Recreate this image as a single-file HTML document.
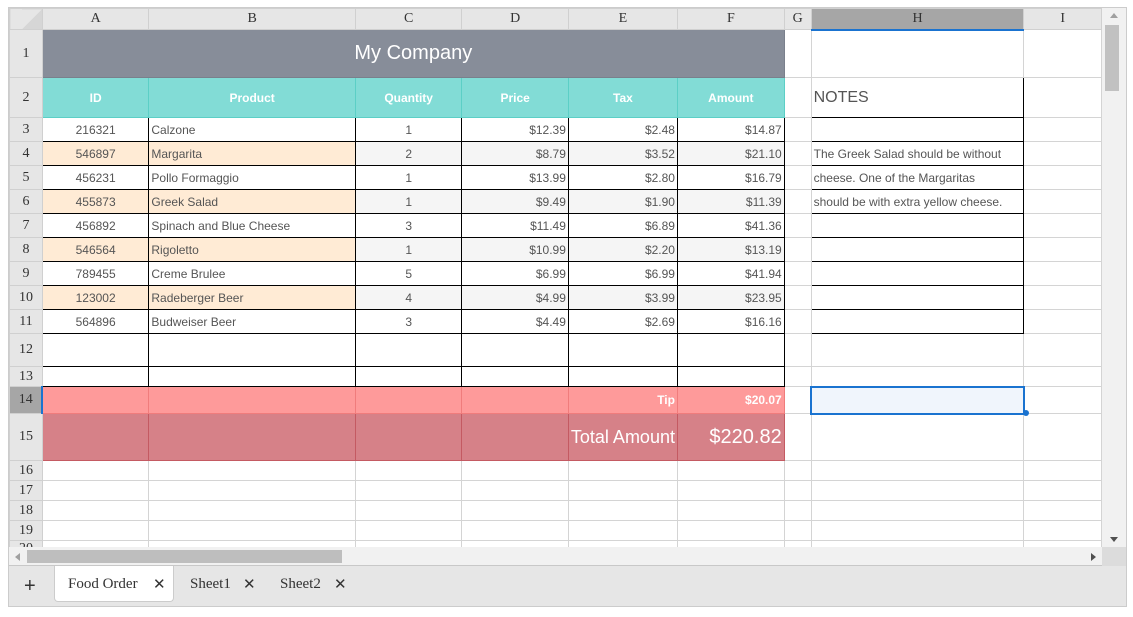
<!DOCTYPE html>
<html><head><meta charset="utf-8"><style>
*{box-sizing:border-box;margin:0;padding:0}
body{width:1133px;height:617px;background:#fff;position:relative;overflow:hidden;font-family:"Liberation Sans",Arial,sans-serif}
#box{position:absolute;left:8px;top:7px;width:1119px;height:600px;border:1px solid #ccc;background:#fff;overflow:hidden}
#grid{position:absolute;left:0;top:0;width:1093px;height:539px;overflow:hidden}
table{border-collapse:collapse;table-layout:fixed;position:absolute;left:0;top:0}
td{border:1px solid #d4d4d4;font-size:12px;color:#555;overflow:hidden;white-space:nowrap;padding:0 2px;vertical-align:middle}
td.h{background:#e6e6e6;font-family:"Liberation Serif",serif;font-size:14px;color:#333;text-align:center;border-color:#d0d0d0}
td.hs{background:#a6a6a6}
td.b{border:1px solid #000}
td.c{text-align:center}
td.r{text-align:right}
tr.alt td.o{background:#ffebd5}
tr.alt td.g{background:#f5f5f5}
td.t{background:#82dcd6;color:#fff;font-weight:bold;text-align:center;border-color:#5ccfc6}
td.red{background:#fe9a9a;border-color:#f07c7c;color:#fff;font-weight:bold;text-align:right}
td.dred{background:#d68188;border-color:#c45a62;color:#fff;text-align:right}
</style></head><body>
<div id="box">
<div id="grid">
<table>
<colgroup><col style="width:33px"><col style="width:107px"><col style="width:207px"><col style="width:107px"><col style="width:107px"><col style="width:107px"><col style="width:107px"><col style="width:27px"><col style="width:213px"><col style="width:78px"></colgroup>
<tr style="height:21px"><td class="h" style="background:linear-gradient(135deg,#e6e6e6 60%,#d6d6d6 60%)"></td><td class="h">A</td><td class="h">B</td><td class="h">C</td><td class="h">D</td><td class="h">E</td><td class="h">F</td><td class="h">G</td><td class="h hs" style="border-bottom:2px solid #1a73d0">H</td><td class="h">I</td></tr>
<tr style="height:48px"><td class="h">1</td><td colspan="6" style="background:#878d99;color:#fff;font-size:20px;text-align:center;border-color:#7a808c">My Company</td><td></td><td></td><td></td></tr>
<tr style="height:40px"><td class="h">2</td><td class="t">ID</td><td class="t">Product</td><td class="t">Quantity</td><td class="t">Price</td><td class="t">Tax</td><td class="t">Amount</td><td></td><td class="b" style="font-size:16px">NOTES</td><td></td></tr>
<tr style="height:24px"><td class="h">3</td><td class="b c o">216321</td><td class="b o">Calzone</td><td class="b c g">1</td><td class="b r g">$12.39</td><td class="b r g">$2.48</td><td class="b r g">$14.87</td><td></td><td class="b"></td><td></td></tr>
<tr class="alt" style="height:24px"><td class="h">4</td><td class="b c o">546897</td><td class="b o">Margarita</td><td class="b c g">2</td><td class="b r g">$8.79</td><td class="b r g">$3.52</td><td class="b r g">$21.10</td><td></td><td class="b">The Greek Salad should be without</td><td></td></tr>
<tr style="height:24px"><td class="h">5</td><td class="b c">456231</td><td class="b">Pollo Formaggio</td><td class="b c">1</td><td class="b r">$13.99</td><td class="b r">$2.80</td><td class="b r">$16.79</td><td></td><td class="b">cheese. One of the Margaritas</td><td></td></tr>
<tr class="alt" style="height:24px"><td class="h">6</td><td class="b c o">455873</td><td class="b o">Greek Salad</td><td class="b c g">1</td><td class="b r g">$9.49</td><td class="b r g">$1.90</td><td class="b r g">$11.39</td><td></td><td class="b">should be with extra yellow cheese.</td><td></td></tr>
<tr style="height:24px"><td class="h">7</td><td class="b c">456892</td><td class="b">Spinach and Blue Cheese</td><td class="b c">3</td><td class="b r">$11.49</td><td class="b r">$6.89</td><td class="b r">$41.36</td><td></td><td class="b"></td><td></td></tr>
<tr class="alt" style="height:24px"><td class="h">8</td><td class="b c o">546564</td><td class="b o">Rigoletto</td><td class="b c g">1</td><td class="b r g">$10.99</td><td class="b r g">$2.20</td><td class="b r g">$13.19</td><td></td><td class="b"></td><td></td></tr>
<tr style="height:24px"><td class="h">9</td><td class="b c">789455</td><td class="b">Creme Brulee</td><td class="b c">5</td><td class="b r">$6.99</td><td class="b r">$6.99</td><td class="b r">$41.94</td><td></td><td class="b"></td><td></td></tr>
<tr class="alt" style="height:24px"><td class="h">10</td><td class="b c o">123002</td><td class="b o">Radeberger Beer</td><td class="b c g">4</td><td class="b r g">$4.99</td><td class="b r g">$3.99</td><td class="b r g">$23.95</td><td></td><td class="b"></td><td></td></tr>
<tr style="height:24px"><td class="h">11</td><td class="b c">564896</td><td class="b">Budweiser Beer</td><td class="b c">3</td><td class="b r">$4.49</td><td class="b r">$2.69</td><td class="b r">$16.16</td><td></td><td class="b"></td><td></td></tr>
<tr style="height:33px"><td class="h">12</td><td class="b"></td><td class="b"></td><td class="b"></td><td class="b"></td><td class="b"></td><td class="b"></td><td></td><td></td><td></td></tr>
<tr style="height:20px"><td class="h">13</td><td class="b"></td><td class="b"></td><td class="b"></td><td class="b"></td><td class="b"></td><td class="b"></td><td></td><td></td><td></td></tr>
<tr style="height:27px"><td class="h hs" style="border-right:2px solid #1a73d0">14</td><td class="red"></td><td class="red"></td><td class="red"></td><td class="red"></td><td class="red">Tip</td><td class="red">$20.07</td><td></td><td style="background:#f0f5fc;border:2px solid #1a73d0"></td><td></td></tr>
<tr style="height:47px"><td class="h">15</td><td class="dred"></td><td class="dred"></td><td class="dred"></td><td class="dred"></td><td class="dred" style="font-size:18px">Total Amount</td><td class="dred" style="font-size:20px">$220.82</td><td></td><td></td><td></td></tr>
<tr style="height:20px"><td class="h">16</td><td></td><td></td><td></td><td></td><td></td><td></td><td></td><td></td><td></td></tr>
<tr style="height:20px"><td class="h">17</td><td></td><td></td><td></td><td></td><td></td><td></td><td></td><td></td><td></td></tr>
<tr style="height:20px"><td class="h">18</td><td></td><td></td><td></td><td></td><td></td><td></td><td></td><td></td><td></td></tr>
<tr style="height:20px"><td class="h">19</td><td></td><td></td><td></td><td></td><td></td><td></td><td></td><td></td><td></td></tr>
<tr style="height:20px"><td class="h" style="vertical-align:top">20</td><td></td><td></td><td></td><td></td><td></td><td></td><td></td><td></td><td></td></tr>
</table>
<div style="position:absolute;left:1014px;top:402px;width:6px;height:6px;border-radius:50%;background:#1a73d0"></div>
</div>
<div style="position:absolute;left:1093px;top:0;width:25px;height:539px;background:#f1f1f1">
<div style="position:absolute;left:8px;top:5px;width:0;height:0;border-left:4px solid transparent;border-right:4px solid transparent;border-bottom:5px solid #a0a0a0"></div>
<div style="position:absolute;left:3px;top:17px;width:14px;height:66px;background:#c1c1c1"></div>
<div style="position:absolute;left:8px;top:529px;width:0;height:0;border-left:4px solid transparent;border-right:4px solid transparent;border-top:5px solid #505050"></div>
</div>
<div style="position:absolute;left:0;top:539px;width:1093px;height:19px;background:#f1f1f1;border-bottom:1px solid #c8c8c8">
<div style="position:absolute;left:6px;top:6px;border-top:4px solid transparent;border-bottom:4px solid transparent;border-right:5px solid #a0a0a0"></div>
<div style="position:absolute;left:18px;top:3px;width:315px;height:13px;background:#bebebe"></div>
<div style="position:absolute;left:1082px;top:6px;border-top:4px solid transparent;border-bottom:4px solid transparent;border-left:5px solid #505050"></div>
</div>
<div style="position:absolute;left:1093px;top:539px;width:25px;height:19px;background:#dcdcdc"></div>
<div style="position:absolute;left:0;top:558px;width:1118px;height:41px;background:#e6e6e6;font-family:'Liberation Serif',serif;font-size:15px;color:#333">
<div style="position:absolute;left:15px;top:9px;font-size:20px;font-family:'Liberation Sans',sans-serif">+</div>
<div style="position:absolute;left:45px;top:0;width:120px;height:36px;background:#fff;border:1px solid #ccc;border-top:none;border-radius:0 0 4px 4px"></div>
<div style="position:absolute;left:59px;top:10px">Food Order</div>
<div style="position:absolute;left:144px;top:9px;font-family:'DejaVu Sans',sans-serif;font-size:15px;font-weight:bold">✕</div>
<div style="position:absolute;left:181px;top:10px">Sheet1</div>
<div style="position:absolute;left:234px;top:9px;font-family:'DejaVu Sans',sans-serif;font-size:15px;font-weight:bold">✕</div>
<div style="position:absolute;left:271px;top:10px">Sheet2</div>
<div style="position:absolute;left:325px;top:9px;font-family:'DejaVu Sans',sans-serif;font-size:15px;font-weight:bold">✕</div>
</div>
</div>
</body></html>
